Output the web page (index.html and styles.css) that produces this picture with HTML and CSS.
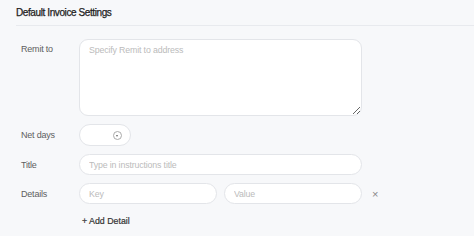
FILE: index.html
```html
<!DOCTYPE html>
<html lang="en">
<head>
    <meta charset="UTF-8">
    <meta name="viewport" content="width=device-width, initial-scale=1.0">
    <title>Default Invoice Settings</title>
    <link rel="stylesheet" href="styles.css">
</head>
<body>

    <div class="panel">
        <div class="panel-header">
            <h2 class="panel-title">Default Invoice Settings</h2>
        </div>

        <div class="form">
            <!-- Remit to -->
            <div class="row row-top">
                <label class="label">Remit to</label>
                <textarea class="field textarea" placeholder="Specify Remit to address"></textarea>
            </div>

            <!-- Net days -->
            <div class="row">
                <label class="label">Net days</label>
                <div class="field select">
                    <span class="select-icon"></span>
                </div>
            </div>

            <!-- Title -->
            <div class="row">
                <label class="label">Title</label>
                <input class="field input wide" type="text" placeholder="Type in instructions title">
            </div>

            <!-- Details -->
            <div class="row">
                <label class="label">Details</label>
                <div class="detail-pair">
                    <input class="field input" type="text" placeholder="Key">
                    <input class="field input" type="text" placeholder="Value">
                </div>
                <span class="remove">&times;</span>
            </div>

            <div class="row row-add">
                <span class="label"></span>
                <a class="add-detail">+ Add Detail</a>
            </div>
        </div>
    </div>

</body>
</html>
```

FILE: styles.css
```css
/* Base */
body {
    margin: 0;
    background: #ffffff;
    font-family: "Liberation Sans", Arial, sans-serif;
    color: #333;
}

.panel {
    background: #f7f8fa;
    height: 236px;
    overflow: hidden;
}

.panel-header {
    margin-left: 16px;
    height: 25px;
    border-bottom: 1px solid #e8eaee;
    display: flex;
    align-items: center;
}

.panel-title {
    margin: 0;
    font-size: 10px;
    letter-spacing: -0.4px;
    font-weight: normal;
    color: #222;
    -webkit-text-stroke: 0.25px #222;
}

.form {
    padding-top: 13px;
    display: flex;
    flex-direction: column;
    gap: 8px;
}

.row {
    display: flex;
    align-items: center;
    padding-left: 21px;
}

.row-top {
    align-items: flex-start;
}

.row-top .label {
    padding-top: 5px;
}

.label {
    width: 58px;
    flex-shrink: 0;
    font-size: 9px;
    letter-spacing: -0.2px;
    color: #5e5e5e;
}

/* Fields */
.field {
    box-sizing: border-box;
    background: #fff;
    border: 1px solid #e3e5e9;
    font-family: inherit;
    font-size: 8.8px;
    letter-spacing: -0.15px;
    color: #333;
    outline: none;
}

.field::placeholder {
    color: #bbb;
}

.textarea {
    width: 283px;
    height: 77px;
    border-radius: 9px;
    padding: 5px 9px;
    resize: vertical;
}

.input {
    height: 21px;
    border-radius: 11px;
    padding: 0 9px;
}

.wide {
    width: 283px;
}

.select {
    width: 52px;
    height: 22px;
    border-radius: 11px;
    display: flex;
    align-items: center;
    justify-content: flex-end;
    padding-right: 8px;
}

.select-icon {
    width: 7px;
    height: 7px;
    border: 1px solid #aaa;
    border-radius: 50%;
    position: relative;
}

.select-icon::after {
    content: "";
    position: absolute;
    left: 2px;
    top: 3px;
    border-left: 1.5px solid transparent;
    border-right: 1.5px solid transparent;
    border-top: 2px solid #666;
}

.detail-pair {
    display: flex;
    gap: 7px;
}

.detail-pair .input {
    width: 138px;
}

.remove {
    margin-left: 10px;
    font-size: 11px;
    color: #888;
}

.row-add {
    margin-top: 4px;
}

.add-detail {
    margin-left: 3px;
    font-size: 8.8px;
    color: #333;
    -webkit-text-stroke: 0.2px #333;
    cursor: pointer;
}
```
